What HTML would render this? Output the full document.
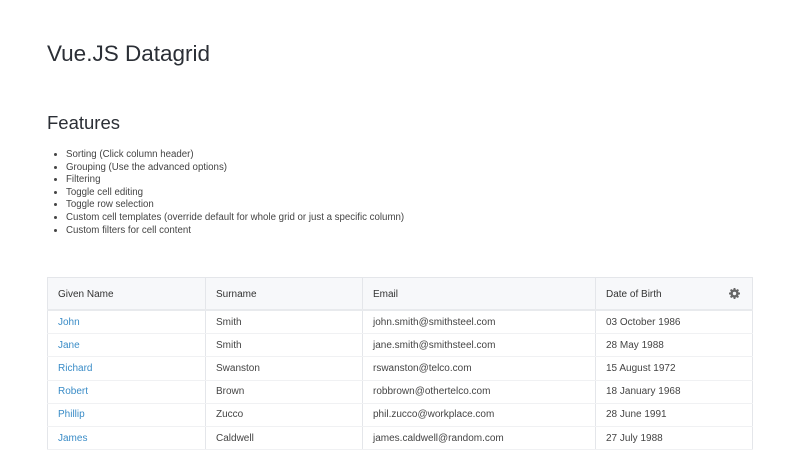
<!DOCTYPE html>
<html><head><meta charset="utf-8"><style>
body{margin:0;background:#fff;font-family:"Liberation Sans",sans-serif;color:#333;width:800px;height:450px;overflow:hidden;position:relative}
h1{position:absolute;left:47px;top:41px;margin:0;font-size:22.5px;font-weight:normal;color:#2b2f36}
h2{position:absolute;left:47px;top:112px;margin:0;font-size:18.5px;font-weight:normal;color:#2b2f36}
ul{position:absolute;left:47px;top:149px;margin:0;padding-left:19px;font-size:9.7px;line-height:12.6px;color:#444}
table{position:absolute;left:47px;top:277px;width:706px;border-collapse:collapse;font-size:10px;border:1px solid #e4e6ea}
th{background:#f7f8fa;text-align:left;font-weight:normal;color:#333;height:29px;padding:2px 10px 0;border-right:1px solid #e4e6ea;border-bottom:2px solid #e8eaed}
td{height:22.2px;padding:0 10px;border-right:1px solid #e4e6ea;border-bottom:1px solid #f0f1f3;color:#444}
td.n{color:#3a8cc7}
</style></head><body>
<h1>Vue.JS Datagrid</h1>
<h2>Features</h2>
<ul>
<li>Sorting (Click column header)</li>
<li>Grouping (Use the advanced options)</li>
<li>Filtering</li>
<li>Toggle cell editing</li>
<li>Toggle row selection</li>
<li>Custom cell templates (override default for whole grid or just a specific column)</li>
<li>Custom filters for cell content</li>
</ul>
<table>
<tr><th style="width:137px">Given Name</th><th style="width:136px">Surname</th><th style="width:212px">Email</th><th style="position:relative">Date of Birth<svg style="position:absolute;right:12px;top:10px" width="11" height="11" viewBox="0 0 16 16"><path fill="#666" d="M6.8 0h2.4l.4 2.2 1.3.6 1.9-1.3 1.700 1.7-1.3 1.9.6 1.3 2.2.4v2.4l-2.2.4-.6 1.3 1.3 1.9-1.7 1.7-1.9-1.3-1.3.6-.4 2.2H6.8l-.4-2.2-1.3-.6-1.9 1.3-1.7-1.7 1.3-1.9-.6-1.3L0 9.2V6.8l2.2-.4.6-1.3-1.3-1.9 1.7-1.7 1.9 1.3 1.3-.6zM8 5.5a2.5 2.5 0 1 0 0 5 2.5 2.5 0 0 0 0-5z"/></svg></th></tr>
<tr><td class="n">John</td><td>Smith</td><td>john.smith@smithsteel.com</td><td>03 October 1986</td></tr>
<tr><td class="n">Jane</td><td>Smith</td><td>jane.smith@smithsteel.com</td><td>28 May 1988</td></tr>
<tr><td class="n">Richard</td><td>Swanston</td><td>rswanston@telco.com</td><td>15 August 1972</td></tr>
<tr><td class="n">Robert</td><td>Brown</td><td>robbrown@othertelco.com</td><td>18 January 1968</td></tr>
<tr><td class="n">Phillip</td><td>Zucco</td><td>phil.zucco@workplace.com</td><td>28 June 1991</td></tr>
<tr><td class="n">James</td><td>Caldwell</td><td>james.caldwell@random.com</td><td>27 July 1988</td></tr>
</table>
</body></html>
